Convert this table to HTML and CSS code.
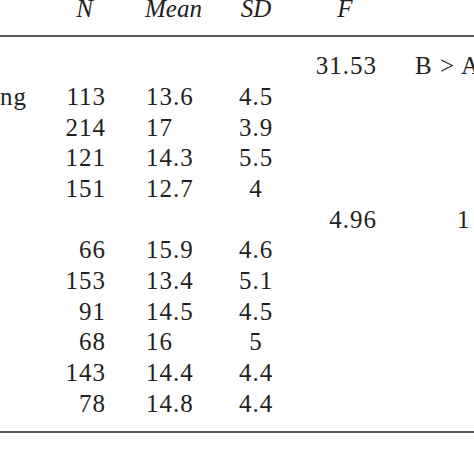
FILE: index.html
```html
<!DOCTYPE html>
<html>
<head>
<meta charset="utf-8">
<link rel="stylesheet" href="styles.css">
</head>
<body>
<div class="table">
  <div class="row head">
    <div class="c0"></div>
    <div class="c1">N</div>
    <div class="c2">Mean</div>
    <div class="c3">SD</div>
    <div class="c4">F</div>
    <div class="c5"></div>
  </div>
  <div class="rule top"></div>
  <div class="body">
    <div class="row"><div class="c0"></div><div class="c1"></div><div class="c2"></div><div class="c3"></div><div class="c4">31.53</div><div class="c5">B &gt; A</div></div>
    <div class="row"><div class="c0">ng</div><div class="c1">113</div><div class="c2">13.6</div><div class="c3">4.5</div><div class="c4"></div><div class="c5"></div></div>
    <div class="row"><div class="c0"></div><div class="c1">214</div><div class="c2">17</div><div class="c3">3.9</div><div class="c4"></div><div class="c5"></div></div>
    <div class="row"><div class="c0"></div><div class="c1">121</div><div class="c2">14.3</div><div class="c3">5.5</div><div class="c4"></div><div class="c5"></div></div>
    <div class="row"><div class="c0"></div><div class="c1">151</div><div class="c2">12.7</div><div class="c3">4</div><div class="c4"></div><div class="c5"></div></div>
    <div class="row"><div class="c0"></div><div class="c1"></div><div class="c2"></div><div class="c3"></div><div class="c4">4.96</div><div class="c5 far">1</div></div>
    <div class="row"><div class="c0"></div><div class="c1">66</div><div class="c2">15.9</div><div class="c3">4.6</div><div class="c4"></div><div class="c5"></div></div>
    <div class="row"><div class="c0"></div><div class="c1">153</div><div class="c2">13.4</div><div class="c3">5.1</div><div class="c4"></div><div class="c5"></div></div>
    <div class="row"><div class="c0"></div><div class="c1">91</div><div class="c2">14.5</div><div class="c3">4.5</div><div class="c4"></div><div class="c5"></div></div>
    <div class="row"><div class="c0"></div><div class="c1">68</div><div class="c2">16</div><div class="c3">5</div><div class="c4"></div><div class="c5"></div></div>
    <div class="row"><div class="c0"></div><div class="c1">143</div><div class="c2">14.4</div><div class="c3">4.4</div><div class="c4"></div><div class="c5"></div></div>
    <div class="row"><div class="c0"></div><div class="c1">78</div><div class="c2">14.8</div><div class="c3">4.4</div><div class="c4"></div><div class="c5"></div></div>
  </div>
  <div class="rule bottom"></div>
</div>
</body>
</html>
```

FILE: styles.css
```css
html, body {
  margin: 0;
  padding: 0;
  background: #ffffff;
  overflow: hidden;
}

body {
  width: 474px;
  height: 474px;
  font-family: "Liberation Serif", "Times New Roman", serif;
  font-size: 25px;
  color: #231f20;
}

.table {
  width: 520px;
  margin-top: -6px;
}

.row {
  display: grid;
  grid-template-columns: 63px 43px 100px 100px 78px 136px;
  height: 30.7px;
  line-height: 30.7px;
  white-space: nowrap;
  letter-spacing: 1px;
}

.head {
  font-style: italic;
  letter-spacing: 0;
}

.c0 { text-align: left; overflow: hidden; }
.c1 { text-align: right; }
.c2 { text-align: left; padding-left: 40px; }
.c3 { text-align: center; }
.c4 { text-align: right; padding-right: 7px; }
.c5 { text-align: left; padding-left: 31px; }
.c5.far { padding-left: 73px; }

.head .c1 { text-align: center; padding-left: 0; }
.head .c2 { padding-left: 39px; }
.head .c4 { text-align: center; padding-right: 0; }

.rule {
  height: 2px;
  background: #58595b;
}

.rule.top { margin-top: 10.3px; }
.body { padding-top: 14.2px; }
.rule.bottom { margin-top: 11.4px; }
```
